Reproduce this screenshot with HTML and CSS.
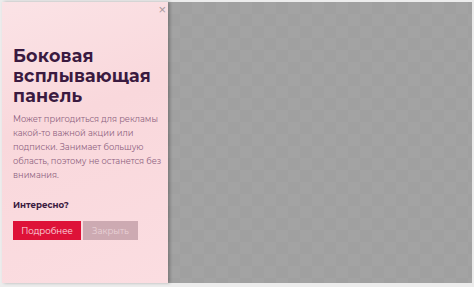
FILE: index.html
```html
<!DOCTYPE html>
<html lang="ru">
<head>
    <meta charset="UTF-8">
    <title>Боковая всплывающая панель</title>
    <link rel="stylesheet" href="styles.css">
</head>
<body>
    <div class="frame">
        <aside class="panel">
            <button class="close" aria-label="Закрыть">&times;</button>
            <h1>Боковая всплывающая панель</h1>
            <p class="text">Может пригодиться для рекламы какой-то важной акции или подписки. Занимает большую область, поэтому не останется без внимания.</p>
            <p class="question">Интересно?</p>
            <div class="actions">
                <button class="btn btn-main">Подробнее</button>
                <button class="btn btn-close">Закрыть</button>
            </div>
        </aside>
        <div class="overlay"></div>
    </div>
</body>
</html>
```

FILE: styles.css
```css
body {
    margin: 0;
    background: #ececec;
    font-family: Montserrat, "Noto Sans", Arial, sans-serif;
}

.frame {
    display: flex;
    width: 470px;
    height: 281px;
    margin: 2px 2px 4px 2px;
    background: #f7f7f7;
}

.panel {
    position: relative;
    width: 155px;
    padding: 0 0 0 11px;
    background: linear-gradient(160deg, #fbe3e6 0%, #f9d8dc 40%, #fbdde1 100%);
    box-shadow: 2px 0 3px rgba(0, 0, 0, 0.25);
    z-index: 1;
}

.close {
    position: absolute;
    top: 1px;
    right: 2px;
    border: none;
    background: none;
    color: #a99aa0;
    font-size: 13px;
    line-height: 1;
    padding: 0;
    cursor: pointer;
}

h1 {
    margin: 44px 0 0;
    font-size: 17.5px;
    line-height: 20px;
    font-weight: 700;
    color: #3a1a40;
    letter-spacing: 0.2px;
}

.text {
    margin: 6px -2px 0 0;
    font-size: 8.3px;
    line-height: 14px;
    color: #8c5f7e;
}

.question {
    margin: 18px 0 0;
    font-size: 8.6px;
    font-weight: 700;
    color: #3a1a40;
}

.actions {
    display: flex;
    gap: 2px;
    margin-top: 11px;
}

.btn {
    border: none;
    height: 19px;
    font-family: inherit;
    font-size: 8.6px;
    padding: 0;
}

.btn-main {
    width: 68px;
    background: #de1238;
    color: #fbe0e4;
}

.btn-close {
    width: 55px;
    background: #cdaab2;
    color: #ead3d8;
}

.overlay {
    flex: 1;
    background-color: #a3a3a3;
    background-image:
        linear-gradient(45deg, #a0a0a0 25%, transparent 25%, transparent 75%, #a0a0a0 75%),
        linear-gradient(45deg, #a0a0a0 25%, transparent 25%, transparent 75%, #a0a0a0 75%);
    background-size: 24px 24px;
    background-position: 0 0, 12px 12px;
}
```
